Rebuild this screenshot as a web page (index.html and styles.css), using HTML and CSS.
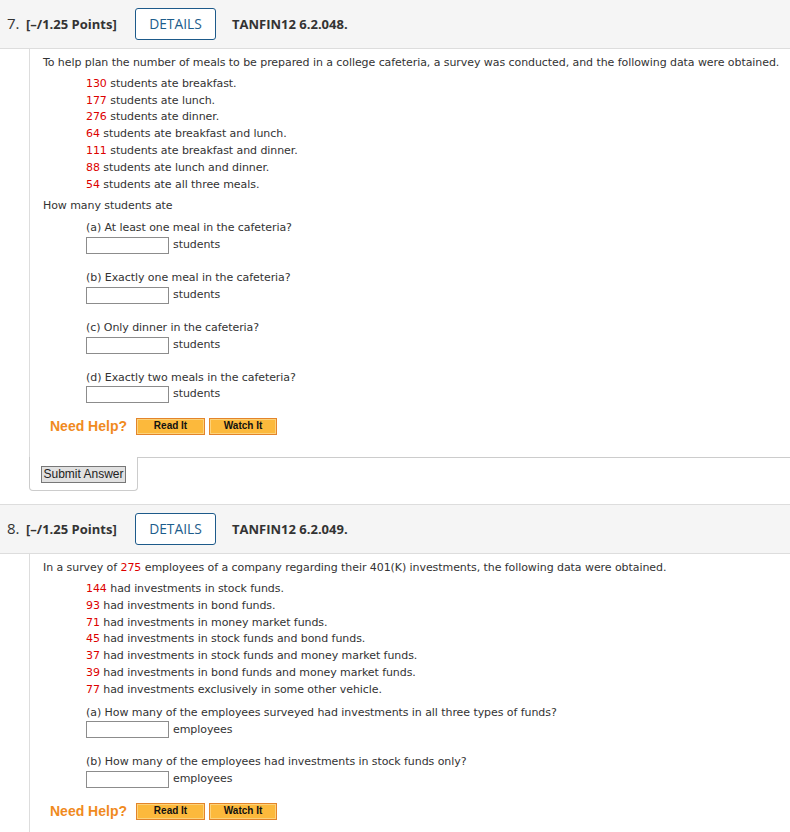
FILE: index.html
```html
<!DOCTYPE html>
<html>
<head>
<meta charset="utf-8">
<link rel="stylesheet" href="styles.css">
</head>
<body>
<div class="page">
  <div class="question">
    <div class="qhead">
      <span class="qnum">7.</span>
      <span class="points">[–/1.25 Points]</span>
      <span class="details">DETAILS</span>
      <span class="qcode">TANFIN12 6.2.048.</span>
    </div>
    <div class="qbody">
      <div class="intro">To help plan the number of meals to be prepared in a college cafeteria, a survey was conducted, and the following data were obtained.</div>
      <div class="list">
        <div><span class="num">130</span> students ate breakfast.</div>
        <div><span class="num">177</span> students ate lunch.</div>
        <div><span class="num">276</span> students ate dinner.</div>
        <div><span class="num">64</span> students ate breakfast and lunch.</div>
        <div><span class="num">111</span> students ate breakfast and dinner.</div>
        <div><span class="num">88</span> students ate lunch and dinner.</div>
        <div><span class="num">54</span> students ate all three meals.</div>
      </div>
      <div class="prompt">How many students ate</div>
      <div class="parts">
        <div class="part">
          <div>(a) At least one meal in the cafeteria?</div>
          <div class="answer"><span class="box"></span><span class="unit">students</span></div>
        </div>
        <div class="part">
          <div>(b) Exactly one meal in the cafeteria?</div>
          <div class="answer"><span class="box"></span><span class="unit">students</span></div>
        </div>
        <div class="part">
          <div>(c) Only dinner in the cafeteria?</div>
          <div class="answer"><span class="box"></span><span class="unit">students</span></div>
        </div>
        <div class="part">
          <div>(d) Exactly two meals in the cafeteria?</div>
          <div class="answer"><span class="box"></span><span class="unit">students</span></div>
        </div>
      </div>
      <div class="help">
        <span class="help-label">Need Help?</span>
        <span class="help-btn read">Read It</span>
        <span class="help-btn watch">Watch It</span>
      </div>
    </div>
    <div class="submit-row">
      <div class="submit-tab"><span class="submit-btn">Submit Answer</span></div>
      <div class="submit-fill"></div>
    </div>
  </div>

  <div class="question q8">
    <div class="qhead">
      <span class="qnum">8.</span>
      <span class="points">[–/1.25 Points]</span>
      <span class="details">DETAILS</span>
      <span class="qcode">TANFIN12 6.2.049.</span>
    </div>
    <div class="qbody">
      <div class="intro">In a survey of <span class="num">275</span> employees of a company regarding their 401(K) investments, the following data were obtained.</div>
      <div class="list">
        <div><span class="num">144</span> had investments in stock funds.</div>
        <div><span class="num">93</span> had investments in bond funds.</div>
        <div><span class="num">71</span> had investments in money market funds.</div>
        <div><span class="num">45</span> had investments in stock funds and bond funds.</div>
        <div><span class="num">37</span> had investments in stock funds and money market funds.</div>
        <div><span class="num">39</span> had investments in bond funds and money market funds.</div>
        <div><span class="num">77</span> had investments exclusively in some other vehicle.</div>
      </div>
      <div class="parts tight">
        <div class="part">
          <div>(a) How many of the employees surveyed had investments in all three types of funds?</div>
          <div class="answer"><span class="box"></span><span class="unit">employees</span></div>
        </div>
        <div class="part">
          <div>(b) How many of the employees had investments in stock funds only?</div>
          <div class="answer"><span class="box"></span><span class="unit">employees</span></div>
        </div>
      </div>
      <div class="help">
        <span class="help-label">Need Help?</span>
        <span class="help-btn read">Read It</span>
        <span class="help-btn watch">Watch It</span>
      </div>
    </div>
  </div>
</div>
</body>
</html>
```

FILE: styles.css
```css
html, body {
  margin: 0;
  padding: 0;
  background: #fff;
}
body {
  font-family: "DejaVu Sans", Verdana, sans-serif;
  font-size: 11px;
  line-height: 16.8px;
  color: #333;
  overflow: hidden;
}
.page {
  margin-top: -1px;
}
.q8 {
  margin-top: 13px;
}
.qhead {
  display: flex;
  align-items: center;
  height: 48px;
  background: #f5f5f5;
  border-top: 1px solid #ddd;
  border-bottom: 1px solid #ddd;
  font-family: "Open Sans", "Noto Sans", sans-serif;
  color: #333;
}
.qnum {
  font-size: 15px;
  margin-left: 7px;
  width: 19px;
  position: relative;
  top: -1px;
}
.points {
  font-size: 13px;
  font-weight: 700;
  width: 109px;
}
.details {
  box-sizing: border-box;
  width: 81px;
  height: 32px;
  border: 1px solid #1d5a8a;
  border-radius: 3px;
  color: #1d5d8c;
  font-size: 13.8px;
  display: flex;
  align-items: center;
  justify-content: center;
  background: #fff;
}
.qcode {
  font-size: 13px;
  font-weight: 700;
  margin-left: 16px;
}
.qbody {
  margin-left: 29px;
  border-left: 1px solid #ddd;
  padding: 6px 0 22px 13px;
  letter-spacing: -0.07px;
}
.num {
  color: #dd0000;
}
.list {
  margin: 4px 0 0 43px;
}
.prompt {
  margin-top: 5px;
}
.parts {
  margin: 5px 0 0 43px;
}
.parts.tight {
  margin-top: 6px;
}
.part + .part {
  margin-top: 16px;
}
.answer {
  display: flex;
  align-items: center;
  height: 17px;
}
.box {
  box-sizing: border-box;
  width: 83px;
  height: 17px;
  border: 1px solid #8c8c8c;
  background: #fff;
}
.unit {
  margin-left: 4px;
}
.help {
  display: flex;
  align-items: center;
  margin: 15px 0 0 7px;
  height: 17px;
  letter-spacing: 0;
}
.help-label {
  font-family: "Liberation Sans", Arial, sans-serif;
  font-weight: 700;
  font-size: 14px;
  color: #f08a1e;
  margin-right: 9px;
}
.help-btn {
  box-sizing: border-box;
  height: 17px;
  display: flex;
  align-items: center;
  justify-content: center;
  font-family: "Liberation Sans", Arial, sans-serif;
  font-weight: 700;
  font-size: 10px;
  color: #111;
  background: #fcb93c;
  border: 1px solid #e3842a;
  box-shadow: inset 0 0 0 1px #fcd27a;
}
.help-btn.read {
  width: 69px;
  margin-right: 4px;
}
.help-btn.watch {
  width: 68px;
}
.submit-row {
  display: flex;
  margin-left: 29px;
}
.submit-tab {
  box-sizing: border-box;
  width: 109px;
  border: 1px solid #ccc;
  border-top: none;
  border-radius: 0 0 4px 4px;
  padding: 9px 0 6px 11px;
}
.submit-fill {
  flex: 1;
  border-top: 1px solid #ccc;
}
.submit-btn {
  display: inline-flex;
  align-items: center;
  justify-content: center;
  box-sizing: border-box;
  width: 85px;
  height: 17px;
  font-family: "Liberation Sans", Arial, sans-serif;
  font-size: 12px;
  color: #222;
  background: #e1e1e1;
  border: 1px solid #777;
}
```
